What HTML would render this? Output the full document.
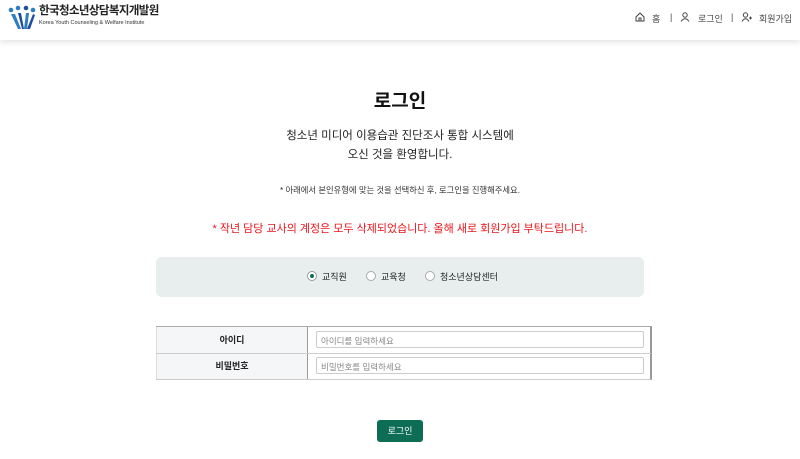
<!DOCTYPE html>
<html><head><meta charset="utf-8"><style>
*{margin:0;padding:0;box-sizing:border-box}
body{width:800px;height:459px;background:#fff;font-family:"Liberation Sans","Noto Sans CJK KR",sans-serif;color:#222;position:relative;overflow:hidden}
.hdr{position:absolute;left:0;top:0;width:800px;height:40px;background:#fff;box-shadow:0 2px 6px rgba(0,0,0,.12)}
.abs{position:absolute;white-space:nowrap}
.nav{font-size:9px;color:#444;top:12px}
</style></head><body>
<div class="hdr">
<svg class="abs" style="left:8px;top:5px" width="28" height="26" viewBox="0 0 28 26">
<circle cx="3" cy="5" r="2.3" fill="#2d7fc1"/><circle cx="10" cy="3" r="2.3" fill="#2d7fc1"/><circle cx="18" cy="3" r="2.3" fill="#1f4f9a"/><circle cx="25" cy="5" r="2.3" fill="#2d7fc1"/>
<path d="M3 9 L10 24 L13 24 L7 9Z" fill="#2d7fc1"/><path d="M10 8 L14 24 L16 24 L13 8Z" fill="#1f4f9a"/><path d="M18 8 L16 24 L19 24 L21 8Z" fill="#2d7fc1"/><path d="M25 9 L19 24 L22 24 L27 10Z" fill="#1f4f9a"/>
</svg>
<div class="abs" style="left:39px;top:4px;font-size:11.5px;line-height:14px;font-weight:bold;color:#222;letter-spacing:-.6px">한국청소년상담복지개발원</div>
<div class="abs" style="left:39px;top:20px;font-size:5.5px;line-height:7px;color:#333">Korea Youth Counseling &amp; Welfare Institute</div>
<svg class="abs" style="left:635px;top:12px" width="10" height="10" viewBox="0 0 10 10"><path d="M1 5 L5 1 L9 5 V9 H1Z M4 9 V6 H6 V9" fill="none" stroke="#444" stroke-width="1"/></svg>
<div class="abs nav" style="left:652px">홈</div>
<div class="abs nav" style="left:670px">|</div>
<svg class="abs" style="left:680px;top:12px" width="10" height="10" viewBox="0 0 10 10"><circle cx="5" cy="3" r="2.2" fill="none" stroke="#444"/><path d="M1 9.5 Q5 4 9 9.5" fill="none" stroke="#444"/></svg>
<div class="abs nav" style="left:698px">로그인</div>
<div class="abs nav" style="left:731px">|</div>
<svg class="abs" style="left:741px;top:12px" width="11" height="10" viewBox="0 0 11 10"><circle cx="4.5" cy="3" r="2.2" fill="none" stroke="#444"/><path d="M1 9.5 Q4.5 4 8 9.5 M8 6 H11 M9.5 4.5 V7.5" fill="none" stroke="#444"/></svg>
<div class="abs nav" style="left:759px">회원가입</div>
</div>
<div class="abs" style="left:0;width:800px;text-align:center;top:86px;font-size:19px;font-weight:bold;color:#111">로그인</div>
<div class="abs" style="left:0;width:800px;text-align:center;top:127px;font-size:11.5px;line-height:19px;color:#222">청소년 미디어 이용습관 진단조사 통합 시스템에<br>오신 것을 환영합니다.</div>
<div class="abs" style="left:0;width:800px;text-align:center;top:184px;font-size:8.3px;color:#333">* 아래에서 본인유형에 맞는 것을 선택하신 후, 로그인을 진행해주세요.</div>
<div class="abs" style="left:0;width:800px;text-align:center;top:220px;font-size:11px;color:#e8141b">* 작년 담당 교사의 계정은 모두 삭제되었습니다. 올해 새로 회원가입 부탁드립니다.</div>
<div class="abs" style="left:156px;top:257px;width:488px;height:40px;background:#e7eeed;border-radius:6px"></div>
<div class="abs" style="left:307px;top:271px;width:10px;height:10px;border:1px solid #999;border-radius:50%;background:#fff"><div style="margin:2px;width:4px;height:4px;border-radius:50%;background:#0d6e55"></div></div>
<div class="abs" style="left:322px;top:270px;font-size:9px">교직원</div>
<div class="abs" style="left:366px;top:271px;width:10px;height:10px;border:1px solid #aaa;border-radius:50%;background:#fff"></div>
<div class="abs" style="left:381px;top:270px;font-size:9px">교육청</div>
<div class="abs" style="left:425px;top:271px;width:10px;height:10px;border:1px solid #aaa;border-radius:50%;background:#fff"></div>
<div class="abs" style="left:440px;top:270px;font-size:9px">청소년상담센터</div>
<div class="abs" style="left:156px;top:326px;width:496px;height:54px;border-top:1px solid #aaa;border-bottom:1px solid #ccc;border-right:2px solid #999"></div>
<div class="abs" style="left:156px;top:327px;width:152px;height:52px;background:#f5f6f8;border-right:1px solid #999;border-left:1px solid #ddd"></div>
<div class="abs" style="left:156px;top:353px;width:495px;height:1px;background:#ccc"></div>
<div class="abs" style="left:156px;top:333px;width:152px;text-align:center;font-size:9px;font-weight:bold">아이디</div>
<div class="abs" style="left:156px;top:359px;width:152px;text-align:center;font-size:9px;font-weight:bold">비밀번호</div>
<div class="abs" style="left:316px;top:331px;width:328px;height:17px;border:1px solid #ccc;border-radius:2px;font-size:8.5px;color:#888;padding:3px 4px">아이디를 입력하세요</div>
<div class="abs" style="left:316px;top:357px;width:328px;height:17px;border:1px solid #ccc;border-radius:2px;font-size:8.5px;color:#888;padding:3px 4px">비밀번호를 입력하세요</div>
<div class="abs" style="left:377px;top:420px;width:46px;height:22px;background:#0d6e55;border-radius:3px;color:#fff;font-size:9px;text-align:center;line-height:22px">로그인</div>
</body></html>
